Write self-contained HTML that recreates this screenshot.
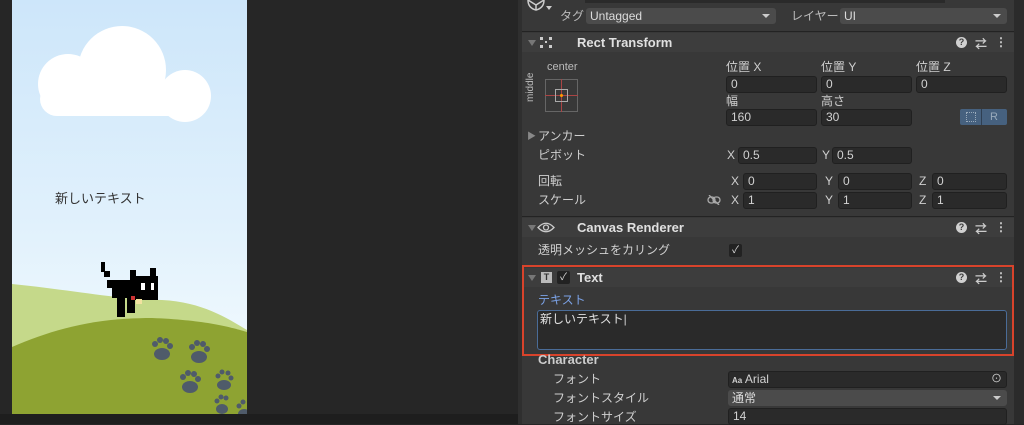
<!DOCTYPE html>
<html><head><meta charset="utf-8"><style>
*{margin:0;padding:0;box-sizing:border-box}
body{width:1024px;height:424px;overflow:hidden;background:#262626;font-family:"Liberation Sans","Noto Sans CJK JP",sans-serif;color:#d0d0d0;font-size:12px;position:relative}
.a{position:absolute}
.t{position:absolute;line-height:14px;white-space:nowrap}
.f{position:absolute;background:#2a2a2a;border:1px solid #202020;border-radius:3px;height:17px;padding-left:4px;line-height:15px;color:#d2d2d2;font-size:12px}
.d{position:absolute;background:#4b4b4b;border-radius:3px;height:16px;padding-left:4px;line-height:16px;color:#dcdcdc}
.d:after{content:"";position:absolute;right:6px;top:6px;border-left:4px solid transparent;border-right:4px solid transparent;border-top:4px solid #ccc}
.hd{position:absolute;left:522px;width:492px;height:19px;background:#3d3d3d;}
.hd b{position:absolute;left:55px;top:2px;font-size:13px;color:#e0e0e0}
.tri{position:absolute;left:6px;top:7px;border-left:4px solid transparent;border-right:4px solid transparent;border-top:6px solid #777}
.ic{position:absolute;top:2px;color:#ccc;font-size:12px;font-weight:bold}
.q{position:absolute;top:4px;width:11px;height:11px;border-radius:50%;background:#d0d0d0;color:#3d3d3d;font-size:9px;line-height:11px;text-align:center;font-weight:bold}
</style></head><body>
<div class="a" style="left:12px;top:0;width:235px;height:414px;background:linear-gradient(#cde6fa,#e1f1fc 55%,#f0f9fe 85%);overflow:hidden">
 <svg width="235" height="414" style="position:absolute;left:0;top:0">
  <g fill="#fff"><circle cx="110" cy="70" r="44"/><circle cx="56" cy="84" r="30"/><circle cx="173" cy="96" r="26"/><rect x="28" y="82" width="170" height="34" rx="17"/></g>
  <path d="M0 284 C60 290 110 300 150 300 C190 302 215 318 235 330 L235 414 L0 414Z" fill="#c5d98a"/>
  <path d="M0 347 C40 330 80 318 140 318 C190 320 215 326 235 332 L235 414 L0 414Z" fill="#8ea332"/>
  <g fill="#000"><rect x="89" y="262" width="4" height="10"/><rect x="92" y="271" width="6" height="6"/><rect x="95" y="280" width="30" height="8"/><rect x="100" y="288" width="26" height="10"/><rect x="118" y="276" width="28" height="24"/><rect x="118" y="270" width="6" height="8"/><rect x="138" y="268" width="6" height="10"/><rect x="105" y="298" width="8" height="19"/><rect x="115" y="298" width="8" height="15"/></g>
  <rect x="129" y="283" width="4" height="7" fill="#fff"/><rect x="139" y="283" width="3" height="7" fill="#fff"/><rect x="119" y="296" width="4" height="4" fill="#c33"/><rect x="124" y="299" width="6" height="5" fill="#f2e2a0"/>
  <g fill="#4f5b6a">
   <g transform="translate(150,350)"><ellipse cx="0" cy="4" rx="8" ry="6"/><circle cx="-7" cy="-6" r="3"/><circle cx="-2" cy="-10" r="3"/><circle cx="4" cy="-9" r="3"/><circle cx="8" cy="-4" r="3"/></g>
   <g transform="translate(187,353)"><ellipse cx="0" cy="4" rx="8" ry="6"/><circle cx="-7" cy="-6" r="3"/><circle cx="-2" cy="-10" r="3"/><circle cx="4" cy="-9" r="3"/><circle cx="8" cy="-4" r="3"/></g>
   <g transform="translate(178,383)"><ellipse cx="0" cy="4" rx="8" ry="6"/><circle cx="-7" cy="-6" r="3"/><circle cx="-2" cy="-10" r="3"/><circle cx="4" cy="-9" r="3"/><circle cx="8" cy="-4" r="3"/></g>
   <g transform="translate(212,381)"><ellipse cx="0" cy="4" rx="7" ry="5"/><circle cx="-6" cy="-5" r="2.5"/><circle cx="-2" cy="-9" r="2.5"/><circle cx="4" cy="-8" r="2.5"/><circle cx="7" cy="-3" r="2.5"/></g>
   <g transform="translate(210,405)"><ellipse cx="0" cy="4" rx="6" ry="5"/><circle cx="-5" cy="-4" r="2.5"/><circle cx="-1" cy="-8" r="2.5"/><circle cx="4" cy="-7" r="2.5"/></g>
   <g transform="translate(232,410)"><ellipse cx="0" cy="4" rx="6" ry="5"/><circle cx="-5" cy="-4" r="2.5"/><circle cx="-1" cy="-8" r="2.5"/></g>
  </g>
 </svg>
 <div class="t" style="left:43px;top:192px;font-size:13px;color:#333">新しいテキスト</div>
</div>
<div class="a" style="left:0;top:414px;width:518px;height:10px;background:#1e1e1e"></div>
<div class="a" style="left:518px;top:0;width:4px;height:424px;background:#2f2f2f"></div>
<div class="a" style="left:522px;top:0;width:492px;height:424px;background:#383838"></div>
<div class="a" style="left:1014px;top:0;width:10px;height:424px;background:#2b2b2b"></div>

<div class="a" style="left:585px;top:0;width:360px;height:3px;background:#2a2a2a"></div>
<svg class="a" style="left:526px;top:0" width="30" height="14"><path d="M2 0 L10 5 L18 0 M10 5 L10 10" stroke="#ccc" fill="none" stroke-width="1.5"/><path d="M2 0 Q2 8 10 10 Q18 8 18 0" stroke="#ccc" fill="none" stroke-width="1.5"/><path d="M20 6 L26 6 L23 10Z" fill="#ccc"/></svg>
<div class="t" style="left:560px;top:9px;color:#bbb">タグ</div>
<div class="d" style="left:586px;top:8px;width:190px">Untagged</div>
<div class="t" style="left:791px;top:9px;color:#bbb">レイヤー</div>
<div class="d" style="left:840px;top:8px;width:167px">UI</div>
<div class="a" style="left:522px;top:31px;width:492px;height:1px;background:#232323"></div>

<div class="hd" style="top:33px"><div class="tri"></div>
<svg class="a" style="left:17px;top:3px" width="14" height="13"><g fill="#ccc"><rect x="1" y="1" width="3" height="3"/><rect x="10" y="1" width="3" height="3"/><rect x="1" y="9" width="3" height="3"/><rect x="10" y="9" width="3" height="3"/><rect x="6" y="5" width="2" height="2"/></g></svg>
<b>Rect Transform</b><div class="q" style="left:434px">?</div><div class="ic" style="left:453px">⇄</div><div class="ic" style="left:473px">⋮</div></div>
<div class="t" style="left:547px;top:60px;font-size:11px;color:#bbb">center</div>
<div class="t" style="left:524px;top:102px;font-size:10px;color:#bbb;transform:rotate(-90deg);transform-origin:left top">middle</div>
<div class="a" style="left:545px;top:79px;width:33px;height:33px;border:1px solid #666"></div>
<div class="a" style="left:561px;top:79px;width:1px;height:33px;background:#a44"></div>
<div class="a" style="left:545px;top:95px;width:33px;height:1px;background:#a44"></div>
<div class="a" style="left:555px;top:89px;width:13px;height:13px;border:1px solid #aaa"></div>
<div class="a" style="left:560px;top:94px;width:3px;height:3px;background:#f90;border-radius:50%"></div>
<div class="t" style="left:726px;top:60px">位置 X</div><div class="t" style="left:821px;top:60px">位置 Y</div><div class="t" style="left:916px;top:60px">位置 Z</div>
<div class="f" style="left:726px;top:76px;width:91px">0</div><div class="f" style="left:821px;top:76px;width:91px">0</div><div class="f" style="left:916px;top:76px;width:91px">0</div>
<div class="t" style="left:726px;top:94px">幅</div><div class="t" style="left:821px;top:94px">高さ</div>
<div class="f" style="left:726px;top:109px;width:91px">160</div><div class="f" style="left:821px;top:109px;width:91px">30</div>
<div class="a" style="left:960px;top:109px;width:47px;height:16px;background:#46617f;border-radius:2px"></div>
<div class="a" style="left:966px;top:112px;width:10px;height:10px;border:1px dotted #9ab"></div>
<div class="a" style="left:981px;top:109px;width:1px;height:16px;background:#2f3f52"></div>
<div class="t" style="left:990px;top:110px;font-size:11px;color:#9ab">R</div>
<div class="t" style="left:527px;top:129px;font-size:9px;color:#888">▶</div><div class="t" style="left:538px;top:129px">アンカー</div>
<div class="t" style="left:538px;top:148px">ピボット</div>
<div class="t" style="left:727px;top:148px">X</div><div class="f" style="left:738px;top:147px;width:79px">0.5</div>
<div class="t" style="left:822px;top:148px">Y</div><div class="f" style="left:832px;top:147px;width:80px">0.5</div>
<div class="t" style="left:538px;top:174px">回転</div>
<div class="t" style="left:731px;top:174px">X</div><div class="f" style="left:743px;top:173px;width:74px">0</div>
<div class="t" style="left:825px;top:174px">Y</div><div class="f" style="left:838px;top:173px;width:74px">0</div>
<div class="t" style="left:919px;top:174px">Z</div><div class="f" style="left:932px;top:173px;width:75px">0</div>
<div class="t" style="left:538px;top:193px">スケール</div>
<svg class="a" style="left:707px;top:195px" width="14" height="10"><g fill="none" stroke="#aaa" stroke-width="1.3"><rect x="1" y="2" width="7" height="6" rx="3"/><rect x="6" y="2" width="7" height="6" rx="3"/><path d="M2 0 L12 10"/></g></svg>
<div class="t" style="left:731px;top:193px">X</div><div class="f" style="left:743px;top:192px;width:74px">1</div>
<div class="t" style="left:825px;top:193px">Y</div><div class="f" style="left:838px;top:192px;width:74px">1</div>
<div class="t" style="left:919px;top:193px">Z</div><div class="f" style="left:932px;top:192px;width:75px">1</div>
<div class="a" style="left:522px;top:216px;width:492px;height:1px;background:#232323"></div>

<div class="hd" style="top:218px"><div class="tri"></div>
<svg class="a" style="left:15px;top:3px" width="18" height="13"><path d="M1 6.5 Q9 -2 17 6.5 Q9 15 1 6.5Z" fill="none" stroke="#ccc" stroke-width="1.3"/><circle cx="9" cy="6.5" r="2.5" fill="none" stroke="#ccc" stroke-width="1.3"/></svg>
<b>Canvas Renderer</b><div class="q" style="left:434px">?</div><div class="ic" style="left:453px">⇄</div><div class="ic" style="left:473px">⋮</div></div>
<div class="t" style="left:538px;top:243px">透明メッシュをカリング</div>
<div class="a" style="left:729px;top:244px;width:13px;height:13px;background:#222;border-radius:2px;color:#ddd;font-size:10px;line-height:13px;text-align:center">✓</div>

<div class="a" style="left:522px;top:265px;width:492px;height:91px;border:2px solid #d8432b"></div>
<div class="hd" style="top:268px;left:524px;width:488px"><div class="tri" style="left:4px"></div><div class="a" style="left:17px;top:4px;width:11px;height:11px;background:#bbb;color:#333;font-size:9px;line-height:11px;text-align:center;font-weight:bold">T</div><div class="a" style="left:33px;top:3px;width:13px;height:13px;background:#222;border-radius:2px;color:#ddd;font-size:10px;line-height:13px;text-align:center">✓</div><b style="left:53px">Text</b><div class="q" style="left:432px">?</div><div class="ic" style="left:451px">⇄</div><div class="ic" style="left:471px">⋮</div></div>
<div class="t" style="left:538px;top:293px;color:#7ba2e6">テキスト</div>
<div class="a" style="left:537px;top:310px;width:470px;height:40px;background:#2a2a2a;border:1px solid #4a6c98;border-radius:3px"></div>
<div class="t" style="left:540px;top:312px;color:#e0e0e0">新しいテキスト<span style="color:#ccc;font-weight:normal">|</span></div>
<div class="t" style="left:538px;top:353px;font-weight:bold;font-size:13px;color:#ccc">Character</div>
<div class="t" style="left:553px;top:372px">フォント</div>
<div class="f" style="left:728px;top:371px;width:279px;padding-left:3px"><span style="font-size:8px;font-weight:bold">Aa</span> Arial<span style="position:absolute;right:4px;top:0;font-size:11px">⊙</span></div>
<div class="t" style="left:553px;top:391px">フォントスタイル</div>
<div class="d" style="left:728px;top:390px;width:279px">通常</div>
<div class="t" style="left:553px;top:410px">フォントサイズ</div>
<div class="f" style="left:728px;top:408px;width:279px">14</div>
</body></html>
